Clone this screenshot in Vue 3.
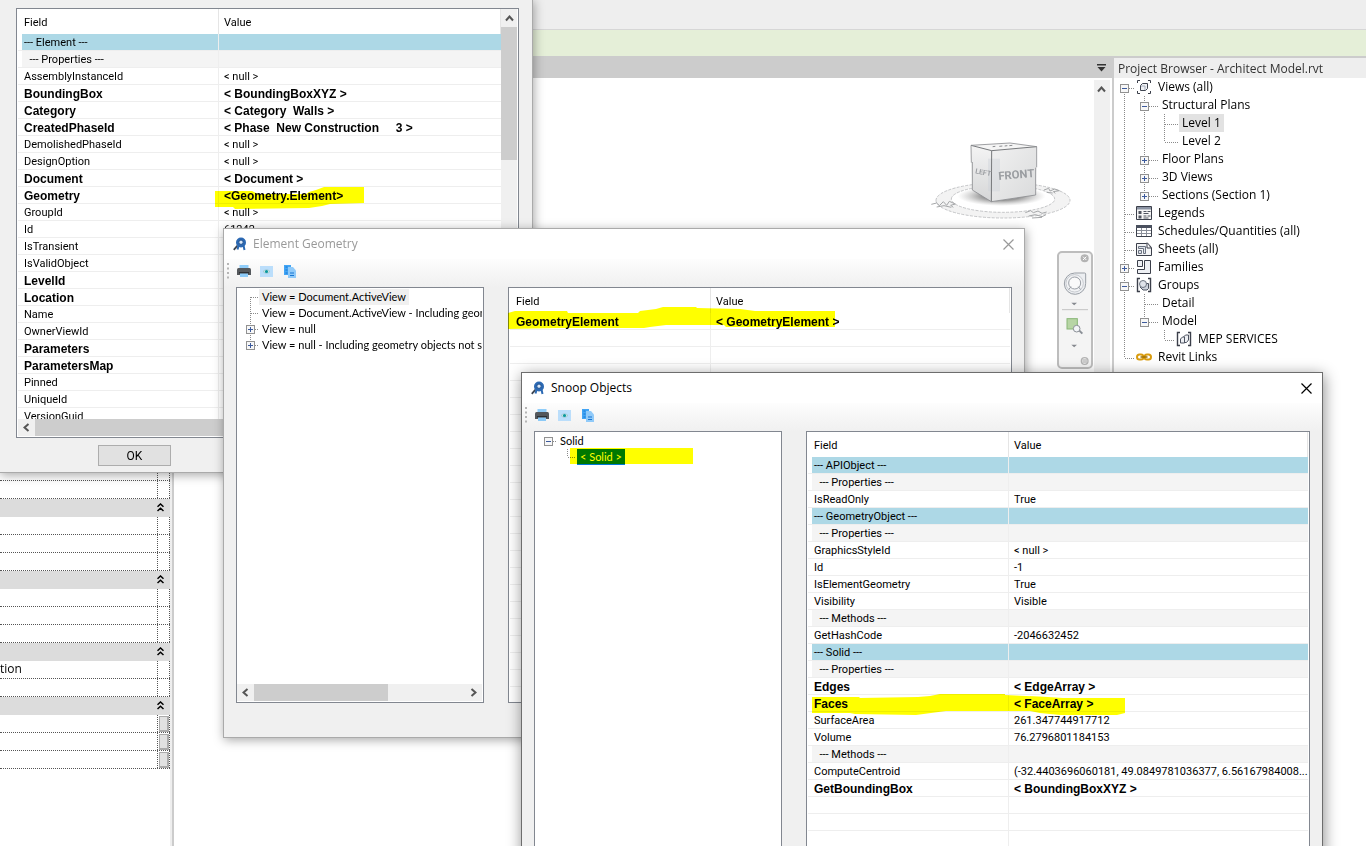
<script setup>
const e = (field, value = '', kind = '') => ({ field, value, kind })
const group = (name) => e(`--- ${name} ---`, '', 'group')
const sub = (name) => e(`  --- ${name} ---`, '', 'sub')
const link = (name, value) => e(name, value, 'link')

const elementRows = [
  group('Element'),
  sub('Properties'),
  e('AssemblyInstanceId', '< null >'),
  link('BoundingBox', '< BoundingBoxXYZ >'),
  link('Category', '< Category  Walls >'),
  link('CreatedPhaseId', '< Phase  New Construction     3 >'),
  e('DemolishedPhaseId', '< null >'),
  e('DesignOption', '< null >'),
  link('Document', '< Document >'),
  link('Geometry', '<Geometry.Element>'),
  e('GroupId', '< null >'),
  e('Id', '61242'),
  e('IsTransient'),
  e('IsValidObject'),
  link('LevelId', ''),
  link('Location', ''),
  e('Name'),
  e('OwnerViewId'),
  link('Parameters', ''),
  link('ParametersMap', ''),
  e('Pinned'),
  e('UniqueId'),
  e('VersionGuid'),
]

const blank = (n) => Array.from({ length: n }, () => e(''))

const windows = [
  {
    id: 'geometry',
    title: 'Element Geometry',
    active: false,
    scroll: true,
    tree: [
      { cells: ['dh'], end: 21, width: 22, label: 'View = Document.ActiveView', state: 'soft' },
      { cells: ['udh'], end: 21, width: 22, label: 'View = Document.ActiveView - Including geom' },
      { cells: ['udh+'], end: 21, width: 22, label: 'View = null' },
      { cells: ['uh+'], end: 21, width: 22, label: 'View = null - Including geometry objects not set' },
    ],
    rows: [link('GeometryElement', '< GeometryElement >'), ...blank(24)],
    marks: [
      '285,85 292,83 344,83 345,85 415,85 417,83 433,81 440,79 473,79 474,80 517,81 532,83 612,83 612,99 503,99 501,97 443,97 427,99 421,100 337,100 285,101',
    ],
  },
  {
    id: 'snoop',
    title: 'Snoop Objects',
    active: true,
    scroll: false,
    tree: [
      { cells: ['h-'], end: 21, width: 22, label: 'Solid' },
      { cells: ['', 'uh'], end: 41, width: 42, label: '< Solid >', state: 'selected' },
    ],
    rows: [
      group('APIObject'),
      sub('Properties'),
      e('IsReadOnly', 'True'),
      group('GeometryObject'),
      sub('Properties'),
      e('GraphicsStyleId', '< null >'),
      e('Id', '-1'),
      e('IsElementGeometry', 'True'),
      e('Visibility', 'Visible'),
      sub('Methods'),
      e('GetHashCode', '-2046632452'),
      group('Solid'),
      sub('Properties'),
      link('Edges', '< EdgeArray >'),
      link('Faces', '< FaceArray >'),
      e('SurfaceArea', '261.347744917712'),
      e('Volume', '76.2796801184153'),
      sub('Methods'),
      e('ComputeCentroid', '(-32.4403696060181, 49.0849781036377, 6.56167984008...'),
      link('GetBoundingBox', '< BoundingBoxXYZ >'),
      ...blank(5),
    ],
    marks: [
      '49,76 172,76 172,92 49,92',
      '291,325 338,325 339,326 397,325 409,324 419,322 484,322 484,323 527,325 542,326 604,326 604,341 596,343 539,343 519,341 509,339 425,339 395,343 334,342 329,341 291,341',
    ],
  },
]

const browser = [
  { cells: ['dh-'], end: 21, width: 22, icon: 'views', label: 'Views (all)' },
  { cells: ['ud', 'udh-'], end: 45, width: 45, label: 'Structural Plans' },
  { cells: ['ud', 'ud', 'udh'], end: 64, width: 65, label: 'Level 1', state: 'current' },
  { cells: ['ud', 'ud', 'uh'], end: 64, width: 65, label: 'Level 2' },
  { cells: ['ud', 'udh+'], end: 45, width: 45, label: 'Floor Plans' },
  { cells: ['ud', 'udh+'], end: 45, width: 45, label: '3D Views' },
  { cells: ['ud', 'uh+'], end: 45, width: 45, label: 'Sections (Section 1)' },
  { cells: ['udh'], end: 21, width: 22, icon: 'legends', label: 'Legends' },
  { cells: ['udh'], end: 21, width: 22, icon: 'schedules', label: 'Schedules/Quantities (all)' },
  { cells: ['udh'], end: 21, width: 22, icon: 'sheets', label: 'Sheets (all)' },
  { cells: ['udh+'], end: 21, width: 22, icon: 'families', label: 'Families' },
  { cells: ['udh-'], end: 21, width: 22, icon: 'groups', label: 'Groups' },
  { cells: ['ud', 'udh'], end: 45, width: 45, label: 'Detail' },
  { cells: ['ud', 'uh-'], end: 45, width: 45, label: 'Model' },
  { cells: ['ud', '', 'uh'], end: 61, width: 62, icon: 'model', label: 'MEP SERVICES' },
  { cells: ['uh'], end: 21, width: 22, icon: 'links', label: 'Revit Links' },
]

const browserMetrics = { first: 10, step: 20, mid: 10, height: 18 }
const treeMetrics = { first: 13, step: 19, mid: 8, height: 16 }

function guidePath(row, m) {
  return row.cells
    .map((cell, i) => {
      const x = m.first + m.step * i + 0.5
      let d = ''
      if (cell.includes('u')) d += `M${x} 0V${m.mid}`
      if (cell.includes('d')) d += `M${x} ${m.mid}V${m.height}`
      if (cell.includes('h')) d += `M${x} ${m.mid + 0.5}H${row.end}`
      return d
    })
    .join('')
}

function expander(row, m) {
  const i = row.cells.findIndex((c) => /[+-]/.test(c))
  if (i < 0) return null
  return { x: m.first + m.step * i - 4, y: m.mid - 4, plus: row.cells[i].includes('+') }
}

const properties = [
  { text: '' }, { text: '' },
  { head: true }, { text: '' }, { text: '' }, { text: '' },
  { head: true }, { text: '' }, { text: '' }, { text: '' },
  { head: true }, { text: 'tion' }, { text: '' },
  { head: true }, { button: true }, { button: true }, { button: true },
]
</script>

<template>
  <div class="screen">
    <div class="ribbon"></div>
    <div class="options"></div>
    <div class="workspace">
      <aside class="props" aria-label="Properties">
        <div class="props-top"></div>
        <div v-for="(p, i) in properties" :key="i" :class="['prop', { head: p.head }]">
          <button v-if="p.head" class="collapse" aria-label="Collapse">
            <svg width="7" height="9" viewBox="0 0 7 9"><path d="M.5 3.8L3.5 1l3 2.8M.5 8L3.5 5.200l3 2.800" fill="none" stroke="#000" stroke-width="1.500" /></svg>
          </button>
          <template v-else>
            <span class="prop-text">{{ p.text }}</span>
            <span class="prop-end"><button v-if="p.button" class="tiny" aria-label="Set"></button></span>
          </template>
        </div>
      </aside>

      <div class="center">
        <div class="tabs">
          <button class="tab-menu" aria-label="Tabs">
            <svg width="9" height="8" viewBox="0 0 9 8"><path d="M0 0h9v1.500H0zM.5 3h8L4.500 7.500z" fill="#333" /></svg>
          </button>
        </div>
        <div class="stage">
          <main class="canvas">
            <svg class="cube" width="144" height="80" viewBox="30 30 432 240">
              <defs>
                <linearGradient id="front" x1="0" y1="0" x2="1" y2="1"><stop offset="0" stop-color="#f1f1f1" /><stop offset="1" stop-color="#d9dadb" /></linearGradient>
                <linearGradient id="left" x1="0" y1="0" x2="0" y2="1"><stop offset="0" stop-color="#f4f4f4" /><stop offset="1" stop-color="#d5d6d7" /></linearGradient>
                <radialGradient id="shade"><stop offset=".45" stop-color="#777" stop-opacity=".75" /><stop offset="1" stop-color="#aaa" stop-opacity="0" /></radialGradient>
              </defs>
              <path d="M48 211a201 53 0 1 0 402 0a201 53 0 1 0-402 0zM94 207a155 40 0 1 1 310 0a155 40 0 1 1-310 0z" fill="#f3f3f3" fill-rule="evenodd" stroke="#b9bbbd" stroke-width="2.500" stroke-dasharray="9 4" />
              <ellipse cx="245" cy="198" rx="132" ry="30" fill="url(#shade)" />
              <path d="M34 223l16-4 8 8 12-12 10 11 8-12 18 8-14 4 8 6M50 231l22-4 22 5M372 180l14-5 4 8 14-6 14 5-18 3 6 5M380 187l18 2M316 248l16-6 8 6 14-5 12 7 14-4M326 258l20-4 20 6 12-6M336 264l30-2" fill="none" stroke="#a5a7a9" stroke-width="3" />
              <path d="M153 46l62 16-1 153-57-35z" fill="url(#left)" />
              <path d="M215 62l135-12-3 145-133 20z" fill="url(#front)" />
              <path d="M153 46l117-7 80 11-135 12z" fill="#f5f5f5" />
              <path d="M204 86h36v98h-36z" fill="#c9ced6" opacity=".35" />
              <path d="M153 46l62 16 135-12M215 62l-1 153" fill="none" stroke="#77797c" stroke-width="3" />
              <path d="M153 46l1 52M157 96v84l57 35 133-20v-82M350 50v62M153 46l117-7 80 11" fill="none" stroke="#8b8d90" stroke-width="2.500" />
              <path d="M218 50l8-1M238 49l9-1M254 48l8-1M268 47l9-1" stroke="#8a8c8f" stroke-width="3" />
              <text x="236" y="150" transform="rotate(-5 236 150)" font-size="34" class="cube-text">FRONT</text>
              <text x="165" y="130" transform="rotate(10 165 130)" font-size="21" class="cube-text">LEFT</text>
            </svg>
            <svg class="nav" width="36" height="118" viewBox="0 0 108 354">
              <rect x="3" y="3" width="102" height="348" rx="12" fill="#f4f4f4" stroke="#bdbdbd" stroke-width="6" />
              <circle cx="83" cy="22" r="12" fill="#b3b3b3" /><path d="M78 17l10 10M88 17l-10 10" stroke="#fff" stroke-width="3" />
              <path d="M53 66h30q3 0 3 3v28a32 32 0 1 1-33-31z" fill="#eceef1" stroke="#9a9fa6" stroke-width="3" />
              <circle cx="53" cy="97" r="26" fill="#f2f3f5" stroke="#b4b8be" stroke-width="2" />
              <circle cx="53" cy="96" r="18" fill="#fafafa" stroke="#9a9fa6" stroke-width="3" />
              <path d="M35 116l7-9M71 116l-7-9" stroke="#9a9fa6" stroke-width="3" />
              <path d="M43 155h17l-8.500 8z" fill="#85888e" />
              <path d="M15 176h78" stroke="#c3c3c3" stroke-width="3" />
              <rect x="30" y="203" width="31" height="31" fill="#b7d5a5" stroke="#88b577" stroke-width="3" />
              <path d="M67 239l9 9" stroke="#8b9097" stroke-width="6" />
              <circle cx="59" cy="233" r="10" fill="#f3f5f8" stroke="#8b9097" stroke-width="3" />
              <path d="M43 281h17l-8.500 8z" fill="#85888e" />
              <circle cx="83" cy="330" r="10" fill="#f4f4f4" stroke="#b3b3b3" stroke-width="4" /><path d="M76 327h14M76 333h14" stroke="#a5a5a5" stroke-width="3" />
            </svg>
          </main>
          <div class="view-scroll">
            <svg width="9" height="7" viewBox="0 0 9 7"><path d="M1 5.500l3.500-4L8 5.500" fill="none" stroke="#555" stroke-width="2" /></svg>
          </div>
        </div>
      </div>

      <aside class="browser">
        <h2>Project Browser - Architect Model.rvt</h2>
        <ul class="tree big">
          <li v-for="row in browser" :key="row.label">
            <svg :width="row.width" height="18" class="guide">
              <path :d="guidePath(row, browserMetrics)" class="dots" />
              <g v-if="expander(row, browserMetrics)" :transform="`translate(${expander(row, browserMetrics).x} ${expander(row, browserMetrics).y})`">
                <rect x=".5" y=".5" width="8" height="8" class="box" />
                <path :d="expander(row, browserMetrics).plus ? 'M2 4.500h5M4.500 2v5' : 'M2 4.500h5'" class="sign" />
              </g>
            </svg>
            <svg v-if="row.icon" class="icon" width="16" height="16" viewBox="0 0 16 16">
              <g v-if="row.icon === 'views'" fill="none" stroke="#3b3f4a">
                <path d="M4 1.500H1.500V4M12 1.500h2.500V4M4 14.500H1.500V12M12 14.500h2.500V12" />
                <path d="M4.500 6.500l2-2h5v5l-2 2h-5z" fill="#eef0f4" stroke="#3f4450" /><path d="M5 7h4v4" stroke="#a8b0bd" />
              </g>
              <g v-else-if="row.icon === 'legends'">
                <path d="M.5 1.500h15v13H.5z" fill="#f6f6f6" stroke="#3b3f4a" /><path d="M1 2h14v2.500H1z" fill="#8b93a3" />
                <path d="M2.500 6h3v3h-3zM2.500 10.500h3v3h-3z" fill="#50545f" /><path d="M7.500 6.500h3m1 0h3M7.500 8.500h5M7.500 11h3m1 0h3M7.500 13h5" stroke="#50545f" />
              </g>
              <g v-else-if="row.icon === 'schedules'">
                <path d="M.5 2.500h15v11H.5z" fill="#fff" stroke="#3b3f4a" /><path d="M0 2h16v3H0z" fill="#4a505e" />
                <path d="M1 7.500h14M1 10.500h14M5.500 5v8M10.500 5v8" stroke="#8a8f99" />
              </g>
              <g v-else-if="row.icon === 'sheets'">
                <path d="M.5 2.500h10l5 5v7H.5z" fill="#f3f4f6" stroke="#3b3f4a" /><path d="M11 1.500l4.500 5V9M11 2v5h4" fill="#fff" stroke="#3b3f4a" />
                <path d="M2.500 9.500h3v3h-3zM2.500 5.500h7v7h-2v-5h-5z" fill="#dfe3e9" stroke="#6c7482" />
              </g>
              <g v-else-if="row.icon === 'families'" fill="#eef0f4" stroke="#3b3f4a">
                <path d="M1.500 1.500h5v6h-5z" /><path d="M8.500 1.500h6v13h-13v-4h7z" />
              </g>
              <g v-else-if="row.icon === 'groups'" fill="none" stroke="#3b3f4a">
                <path d="M4 1.500H1.500v13H4M12 1.500h2.500v13H12" stroke-width="1.400" />
                <path d="M6.500 6.500h6v5l-1.500 1.500H7l-3-3z" fill="#cdd3dd" stroke="#4c5260" /><circle cx="7" cy="7" r="3.500" fill="#dfe3ea" stroke="#6b7380" />
              </g>
              <g v-else-if="row.icon === 'model'" fill="none" stroke="#3b3f4a">
                <path d="M4 1.500H1.500v13H4M12 1.500h2.500v13H12" stroke-width="1.400" />
                <path d="M4.500 8l2-2h2v6h-4zM7.500 6l2-2h3v5l-2 2.500h-2" fill="#eef0f4" stroke="#4c5260" />
              </g>
              <g v-else fill="none" stroke="#d99c10" stroke-width="2">
                <rect x="1" y="5.500" width="6.500" height="5" rx="2.500" /><rect x="8.500" y="5.500" width="6.500" height="5" rx="2.500" />
                <path d="M4.500 8h7" stroke="#9a6d00" stroke-width="1.500" />
              </g>
            </svg>
            <span :class="['label', row.state, { 'with-icon': row.icon }]">{{ row.label }}</span>
          </li>
        </ul>
      </aside>
    </div>

    <section class="win win-element">
      <div class="frame">
        <div class="frame-body">
          <div class="grid-view">
            <table>
              <thead><tr><th>Field</th><th>Value</th></tr></thead>
              <tbody>
                <tr v-for="row in elementRows" :key="row.field" :class="row.kind"><td>{{ row.field }}</td><td>{{ row.value }}</td></tr>
              </tbody>
            </table>
          </div>
          <div class="vscroll">
            <svg width="9" height="7" viewBox="0 0 9 7"><path d="M1 5.500l3.500-4L8 5.500" fill="none" stroke="#555" stroke-width="2" /></svg>
            <div class="vthumb"></div>
          </div>
        </div>
        <div class="hscroll">
          <span class="arrow"><svg width="7" height="9" viewBox="0 0 7 9"><path d="M5.500 1l-4 3.500 4 3.500" fill="none" stroke="#555" stroke-width="2" /></svg></span>
          <div class="hthumb wide"></div>
        </div>
      </div>
      <button class="ok">OK</button>
      <svg class="marks" width="532" height="472"><polygon points="215,191 252,191 258,194 306,194 309,192 316,190 324,187 364,187 364,203 330,204 322,206 309,208 235,209 233,207 215,207" fill="#ff0" /></svg>
    </section>

    <section v-for="w in windows" :key="w.id" :class="['win', 'dialog', w.id, { active: w.active }]">
      <header>
        <svg width="14" height="14" viewBox="0 0 14 14">
          <path d="M4.500 8.500L.8 12.800" stroke="#39424e" stroke-width="1.800" /><path d="M5.500 9l-1 3.500M10.500 8.500l1 4.500" stroke="#2c6ab4" stroke-width="2" />
          <circle cx="8" cy="5.500" r="5" fill="#2c69b3" /><circle cx="8" cy="5.200" r="2.200" fill="#dceafa" stroke="#1d4f8f" />
        </svg>
        <h1>{{ w.title }}</h1>
        <button class="close" aria-label="Close"><svg width="11" height="11" viewBox="0 0 11 11"><path d="M.5.5l10 10M10.500.5l-10 10" stroke="currentColor" stroke-width="1.200" /></svg></button>
      </header>
      <div class="toolbar">
        <svg class="grip" width="2" height="16" viewBox="0 0 2 16"><path d="M0 1h2M0 5.500h2M0 10h2M0 14.500h2" stroke="#b5b5b5" stroke-width="2" /></svg>
        <button aria-label="Print"><svg width="14" height="14" viewBox="0 0 14 14"><path d="M2.500 1h9v4h-9z" fill="#90cdf9" /><path d="M0 5.500q0-1.500 1.500-1.500h11q1.500 0 1.500 1.500V11H0z" fill="#54585c" /><path d="M2 8h10v1.500H2z" fill="#2d3034" /><path d="M3 9.500h8V13H3z" fill="#8ccaf7" /></svg></button>
        <button aria-label="Preview"><svg width="14" height="14" viewBox="0 0 14 14"><path d="M0 2h13v11H0z" fill="#bbdefb" /><path d="M3 7.500Q6.500 4 10 7.500 6.500 11 3 7.500z" fill="#e4f2e6" stroke="#8fbfc7" stroke-width=".7" /><circle cx="6.500" cy="7.500" r="1.600" fill="#0a98a0" /></svg></button>
        <button aria-label="Copy"><svg width="14" height="14" viewBox="0 0 14 14"><path d="M1 1h7v10H1z" fill="#42a5f5" /><path d="M2.500 3h2M2.500 6h2M2.500 9h2" stroke="#1976d2" /><path d="M5 3h5l3 3.500V14H5z" fill="#90caf9" /><path d="M7 9h4M7 11.500h4" stroke="#1976d2" /></svg></button>
      </div>
      <div class="panes">
        <div class="frame tree-pane">
          <ul class="tree small">
            <li v-for="row in w.tree" :key="row.label">
              <svg :width="row.width" height="16" class="guide">
                <path :d="guidePath(row, treeMetrics)" class="dots" />
                <g v-if="expander(row, treeMetrics)" :transform="`translate(${expander(row, treeMetrics).x} ${expander(row, treeMetrics).y})`">
                  <rect x=".5" y=".5" width="8" height="8" class="box" />
                  <path :d="expander(row, treeMetrics).plus ? 'M2 4.500h5M4.500 2v5' : 'M2 4.500h5'" class="sign" />
                </g>
              </svg>
              <span :class="['label', row.state]">{{ row.label }}</span>
            </li>
          </ul>
          <div v-if="w.scroll" class="hscroll">
            <span class="arrow"><svg width="7" height="9" viewBox="0 0 7 9"><path d="M5.500 1l-4 3.500 4 3.500" fill="none" stroke="#555" stroke-width="2" /></svg></span>
            <div class="hthumb"></div>
            <span class="arrow end"><svg width="7" height="9" viewBox="0 0 7 9"><path d="M1.500 1l4 3.500-4 3.500" fill="none" stroke="#555" stroke-width="2" /></svg></span>
          </div>
        </div>
        <div class="frame table-pane">
          <div class="grid-view">
            <table>
              <thead><tr><th>Field</th><th>Value</th></tr></thead>
              <tbody>
                <tr v-for="(row, i) in w.rows" :key="i" :class="row.kind"><td>{{ row.field }}</td><td>{{ row.value }}</td></tr>
              </tbody>
            </table>
          </div>
        </div>
      </div>
      <svg class="marks" width="802" height="510"><polygon v-for="m in w.marks" :key="m" :points="m" fill="#ff0" /></svg>
    </section>
  </div>
</template>

<style>
html, body { background: #fff; overflow: hidden; }
</style>

<style scoped>
.screen {
  position: relative; display: flex; flex-direction: column; height: 100vh; overflow: hidden;
  background: #fff; color: #000; font: 12px/18px "Open Sans", "Noto Sans", sans-serif;
}
.screen * { box-sizing: border-box; }
button { padding: 0; border: 0; background: none; font: inherit; color: inherit; display: flex; align-items: center; justify-content: center; }
h1, h2 { margin: 0; font: inherit; }
ul { margin: 0; padding: 0; list-style: none; }
svg { display: block; flex: none; }

.ribbon { flex: none; height: 30px; background: #eee; border-bottom: 1px solid #d6d6d6; }
.options { flex: none; height: 26px; background: #e5efd8; }
.workspace { flex: 1; min-height: 0; display: flex; border-top: 2px solid #ccc; }

.props { width: 174px; border-right: 2px solid #ccc; padding-right: 2px; background: linear-gradient(#eee, #eee) right / 2px 100% no-repeat; overflow: hidden; }
.props-top { height: 405px; }
.prop { display: flex; height: 18px; border-bottom: 1px dotted #555; }
.prop.head { background: #dcdcdc; justify-content: flex-end; padding-right: 5px; border-bottom: 0; }
.prop-text { flex: 1; line-height: 16px; }
.prop-end { width: 13px; border-left: 1px dotted #555; border-right: 1px dotted #555; padding: 1px 0 0 1px; }
.tiny { width: 10px; height: 16px; background: #e1e1e1; border: 1px solid #aaa; border-right-width: 2px; border-bottom-width: 2px; }
.collapse { width: 9px; height: 16px; }

.center { flex: 1; min-width: 0; display: flex; flex-direction: column; }
.tabs { flex: none; height: 20px; background: #ccc; display: flex; justify-content: flex-end; padding-right: 6px; }
.stage { flex: 1; display: flex; padding-right: 2px; }
.canvas { position: relative; flex: 1; }
.cube { position: absolute; right: 20px; top: 62px; }
.cube-text { font-family: Roboto, sans-serif; font-weight: 700; fill: #9a9da1; }
.nav { position: absolute; right: 1px; top: 173px; }
.view-scroll { width: 16px; background: #f0f0f0; padding: 6px 0 0 3px; margin-top: 2px; }

.browser { width: 254px; border-left: 2px solid #ccc; background: #fff; }
.browser h2 { height: 20px; line-height: 21px; padding-left: 4px; background: #eee; color: #333; white-space: nowrap; }
.tree li { display: flex; white-space: pre; }
.label { flex: none; padding: 0 3px; }
.big .label.with-icon { padding-left: 6px; }
.icon { margin-top: 1px; }
.label.current { background: #e2e2e2; }
.dots { stroke: #8a8a8a; stroke-dasharray: 1 1; fill: none; shape-rendering: crispEdges; }
.box { fill: #f7f7f7; stroke: #919191; }
.sign { stroke: #3c5a9c; shape-rendering: crispEdges; fill: none; }

.win { position: absolute; background: #f0f0f0; border: 1px solid #aaa; box-shadow: 1px 2px 10px rgba(0, 0, 0, .35); }
.win-element { left: -1px; top: -1px; width: 534px; height: 474px; padding: 9px 13px 0 16px; font: 11px/16px Roboto, "Liberation Sans", sans-serif; }
.frame { border: 1px solid #828790; background: #fff; display: flex; flex-direction: column; overflow: hidden; }
.win-element .frame { height: 430px; padding: 0 1px 1px 1px; margin-top: -1px; }
.frame-body { flex: 1; min-height: 0; display: flex; }
.grid-view { flex: 1; min-width: 0; overflow: hidden; }
.vscroll { width: 16px; background: #f0f0f0; padding-top: 6px; display: flex; flex-direction: column; align-items: center; }
.vthumb { width: 16px; height: 133px; margin-top: 5px; background: #cdcdcd; }
.hscroll { flex: none; height: 17px; background: #f0f0f0; display: flex; }
.arrow { width: 17px; display: flex; align-items: center; justify-content: center; }
.arrow.end { margin-left: auto; }
.hthumb { width: 134px; background: #cdcdcd; }
.hthumb.wide { width: 400px; }
.ok { width: 73px; height: 21px; margin: 7px 0 0 82px; background: #e1e1e1; border: 1px solid #adadad; font-size: 12px; }

table { width: 100%; table-layout: fixed; border-collapse: separate; border-spacing: 0; }
th, td { padding: 2px 0 0 6px; text-align: left; white-space: pre; overflow: hidden; font-weight: 400; }
th { height: 25px; border-right: 1px solid #e5e5e5; }
th:first-child { width: 201px; }
td { height: 17px; line-height: 14px; border-bottom: 1px solid #eee; }
td:first-child { border-right: 1px solid #eee; }
td + td, th + th { padding-left: 5px; }
.group td { background: #add8e6; }
.sub td { background: #f4f4f4; }
.group td:first-child { background: linear-gradient(to right, #fff 4px, #add8e6 4px); }
.sub td:first-child { background: linear-gradient(to right, #fff 4px, #f4f4f4 4px); }
.link td { font: 700 12px/14px "Liberation Sans", Arial, sans-serif; }

.dialog { width: 802px; height: 510px; display: flex; flex-direction: column; color: #999; }
.dialog.active { color: #000; border-color: #6d6d6d; box-shadow: 1px 3px 14px rgba(0, 0, 0, .45); }
.geometry { left: 223px; top: 228px; }
.snoop { left: 521px; top: 372px; }
.dialog header { height: 30px; background: #fff; display: flex; align-items: center; gap: 6px; padding: 0 10px 0 9px; }
.close { margin-left: auto; width: 11px; height: 28px; }
.toolbar { height: 28px; display: flex; align-items: center; padding: 0 0 5px 3px; background: linear-gradient(#fdfdfd, #f0f0f0); }
.toolbar button { width: 23px; height: 20px; }
.toolbar .grip { margin-right: 3px; }
.panes { flex: 1; min-height: 0; display: flex; gap: 24px; padding: 0 12px 34px 12px; color: #000; font: 11px/16px Roboto, "Liberation Sans", sans-serif; }
.tree-pane { width: 248px; padding: 1px 1px 1px 0; }
.small { flex: 1; overflow: hidden; font-family: Lato, Roboto, sans-serif; }
.label.soft { background: #f0f0f0; }
.label.selected { background: #0078d7; color: #fff; }
.table-pane { flex: 1; min-width: 0; padding: 0 1px; }
.marks { position: absolute; left: 0; top: 0; mix-blend-mode: multiply; pointer-events: none; }
.dialog .marks { left: -1px; top: -1px; }
</style>
